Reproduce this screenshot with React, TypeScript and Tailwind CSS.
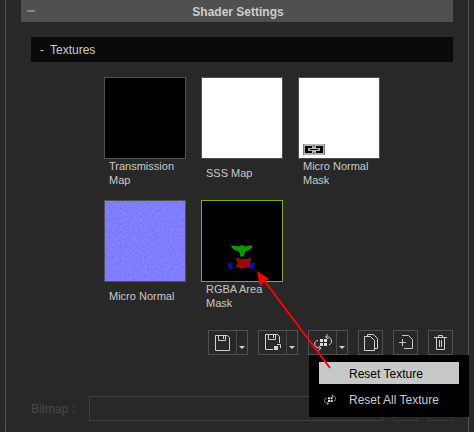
import React from 'react';
import clsx from 'clsx';

// --- Interfaces ---
interface TextureSlot {
  name: string;
  lines: string[];
  fill: string;
  selected?: boolean;
  content?: React.ReactNode;
}

// --- Icons ---
const SaveIcon = () => (
  <svg width="15" height="16" viewBox="0 0 15 16" fill="none" stroke="#d0d0d0">
    <path d="M.5 .5H12.5L14.5 2.5V15.5H.5Z" />
    <path d="M3.5 .5V5.5H10.5V.5M8.5 1V4" />
  </svg>
);

const SaveAsIcon = () => (
  <svg width="16" height="17" viewBox="0 0 16 17" fill="none" stroke="#d0d0d0">
    <path d="M8 15.5H.5V.5H12.5L14.5 2.5V9" />
    <path d="M3.5 .5V5.5H10.5V.5M8.5 1V4" />
    <path d="M9 12H13V16H9Z" fill="#d0d0d0" stroke="none" />
    <path d="M12 10.5H15.5V14" />
  </svg>
);

const ResetIcon = ({ size = 18 }: { size?: number }) => (
  <svg width={size} height={size} viewBox="0 0 18 18" fill="none" stroke="#cfcfcf">
    <path d="M4 6.5C1.8 6.8 .6 8 .6 10C.6 12.4 2.8 14 6.5 14.2M4.5 11.8L7 14.2L4.5 16.8" />
    <path d="M15 10.8C16.8 10.2 17.5 9 17.5 7C17.5 4.4 15.6 2.8 12 2.7M14 .3L11.5 2.7L14 5.2" />
    <path d="M6 5h3v3h-3zM10 5h3v3h-3zM6 9h3v3h-3zM10 9h3v3h-3z" fill="#dcdcdc" stroke="none" />
  </svg>
);

const CopyIcon = () => (
  <svg width="14" height="17" viewBox="0 0 14 17" fill="none" stroke="#d0d0d0">
    <path d="M.5 2.5H6.5L10.5 6.5V16.5H.5Z" />
    <path d="M3.5 2V.5H9.5L13.5 4.5V14.5H11" />
  </svg>
);

const AddIcon = () => (
  <svg width="14" height="15" viewBox="0 0 14 15" fill="none" stroke="#c8c8c8">
    <path d="M3 .5H9.5L13.5 4.5V13.5H5M3.5 4V11M0 7.5H7" />
  </svg>
);

const TrashIcon = () => (
  <svg width="13" height="15" viewBox="0 0 13 15" fill="none" stroke="#d0d0d0">
    <path d="M0 2.5H13M4.5 2V.5H8.5V2M2.5 3V14.5H10.5V3M5.5 5V12M7.5 5V12" />
  </svg>
);

const LinkIcon = () => (
  <svg width="22" height="11" viewBox="0 0 22 11" className="mb-[3px] ml-1 mt-auto">
    <rect width="22" height="11" fill="#b4b4b4" />
    <path d="M9 3H3V8H9M13 3H19V8H13" fill="none" stroke="#000" strokeWidth="2" />
    <path d="M3 3H5V8H3ZM17 3H19V8H17Z" fill="#000" />
    <path d="M7 5.5H15" stroke="#000" />
    <path d="M11 1V3M11 8V10" stroke="#444" />
    <path d="M.5 0V11M21.5 0V11" stroke="#777" />
  </svg>
);

// --- Texture contents ---
const NormalNoise = () => (
  <svg width="80" height="80">
    <filter id="grain" x="0" y="0" width="100%" height="100%" colorInterpolationFilters="sRGB">
      <feTurbulence type="fractalNoise" baseFrequency="0.4 0.6" numOctaves="2" seed="8" />
      <feColorMatrix values=".18 0 0 0 .41  0 .2 0 0 .39  0 0 .06 0 .96  0 0 0 0 1" />
    </filter>
    <rect width="80" height="80" filter="url(#grain)" />
  </svg>
);

const AreaMask = () => (
  <svg width="80" height="80" viewBox="0 0 80 80">
    <filter id="soft" x="-20%" y="-20%" width="140%" height="140%">
      <feGaussianBlur stdDeviation=".55" />
    </filter>
    <g filter="url(#soft)">
      <path d="M29 44.3Q34 44.5 37 45.5Q40 43 43 45.5Q46 44.5 50.5 44.3Q50.5 48.5 43.5 50.5Q42.5 52 41.8 55.5H38.2Q38.2 52 37 50.5Q30 49 29 44.3Z" fill="#089708" />
      <path d="M33.5 56.5L39 58H43L49.5 56.5L48 62L49.5 67L43 66.5L40 68L37 66.5L33.5 67L35.5 62Z" fill="#930808" />
      <path d="M25.5 62L29 62L31 67L29.5 69L26.5 67ZM48.5 63L50.5 61.5L53 62L52 67L49 69L47.5 67Z" fill="#0808ad" />
    </g>
  </svg>
);

// --- Reusable components ---
const TextureTile = ({ slot }: { slot: TextureSlot }) => (
  <div className="h-[123px] w-[82px]">
    <div className={clsx('flex h-[82px] border', slot.fill, slot.selected ? 'border-[#7fac10]' : 'border-[#505050]')}>
      {slot.content}
    </div>
    <div className="flex h-[27px] flex-col justify-center pl-[5px] text-[11px] leading-[14px] whitespace-nowrap text-[#c8c8c8]">
      {slot.lines.map((line) => (
        <span key={line}>{line}</span>
      ))}
    </div>
  </div>
);

const ToolButton = ({ children, split = false }: { children: React.ReactNode; split?: boolean }) => (
  <button className="flex h-[25px] border border-[#505050]">
    <span className={clsx('flex h-full items-center justify-center', split ? 'w-[27px]' : 'w-[23px]')}>{children}</span>
    {split && (
      <>
        <span className="h-full w-px bg-[#484848]" />
        <span className="flex h-full w-[10px] items-end justify-center pb-[5px]">
          <svg width="6" height="3" viewBox="0 0 6 3" fill="#d0d0d0">
            <path d="M0 0H6L3 3Z" />
          </svg>
        </span>
      </>
    )}
  </button>
);

const slots: TextureSlot[] = [
  { name: 'transmission', lines: ['Transmission', 'Map'], fill: 'bg-black' },
  { name: 'sss', lines: ['SSS Map'], fill: 'bg-white' },
  { name: 'micro-mask', lines: ['Micro Normal', 'Mask'], fill: 'bg-white', content: <LinkIcon /> },
  { name: 'micro', lines: ['Micro Normal'], fill: 'bg-[#7f7fff]', content: <NormalNoise /> },
  { name: 'rgba', lines: ['RGBA Area', 'Mask'], fill: 'bg-black', selected: true, content: <AreaMask /> },
];

// --- Main component ---
export default function App() {
  return (
    <main className="relative h-[432px] w-[474px] overflow-hidden bg-[#282828] pr-[5px] pl-[5px] font-['Liberation_Sans',Arial,sans-serif] text-xs">
      <div className="h-full border-x border-b border-x-[#545454] border-b-[#30262a] pr-[15px] pl-[15px]">
        <header className="relative flex h-[22px] items-center justify-center bg-[#505050] pt-[2px] pl-[2px] font-bold text-[#cccccc]">
          <span className="absolute top-[10px] left-[6px] h-[2px] w-2 bg-[#858585]" />
          <span>Shader Settings</span>
        </header>

        <div className="mt-[15px] ml-[10px] flex h-[25px] items-center bg-[#0a0a0a] pl-[9px] text-[#cccccc]">
          <span className="w-[10px]">-</span>
          <span>Textures</span>
        </div>

        <div className="mt-[15px] ml-[83px] grid w-fit grid-cols-3 gap-x-[15px]">
          {slots.map((slot) => (
            <TextureTile key={slot.name} slot={slot} />
          ))}
        </div>

        <div className="mt-[7px] flex justify-end gap-[10px]">
          <ToolButton split><SaveIcon /></ToolButton>
          <ToolButton split><SaveAsIcon /></ToolButton>
          <ToolButton split><ResetIcon /></ToolButton>
          <ToolButton><CopyIcon /></ToolButton>
          <ToolButton><AddIcon /></ToolButton>
          <ToolButton><TrashIcon /></ToolButton>
        </div>

        <div className="mt-[41px] ml-[10px] flex h-[25px] items-center gap-[10px] text-[#484848]">
          <span className="w-12">Bitmap :</span>
          <span className="h-full flex-1 border border-[#404040]" />
          <span className="h-full w-[25px] border border-[#363636]" />
          <span className="h-full w-[25px] border border-[#363636]" />
        </div>
      </div>

      {/* Reset dropdown */}
      <div className="absolute top-[355px] left-[309px] h-[62px] w-40 bg-black px-[10px] pt-[7px]">
        <div className="flex h-[22px] items-center bg-[#c8c8c8] pt-[2px] pl-[30px] text-black">Reset Texture</div>
        <div className="mt-1 flex h-[22px] items-center pt-[2px] text-[#cccccc]">
          <span className="w-[30px] pl-[5px]"><ResetIcon size={12} /></span>
          <span>Reset All Texture</span>
        </div>
      </div>

      <svg className="pointer-events-none absolute top-0 left-0" width="474" height="432">
        <path d="M263 279L330 368" stroke="#f00" strokeWidth="2" />
        <path d="M257 271L269 279L265 281L260 286Z" fill="#f00" />
      </svg>
    </main>
  );
}
